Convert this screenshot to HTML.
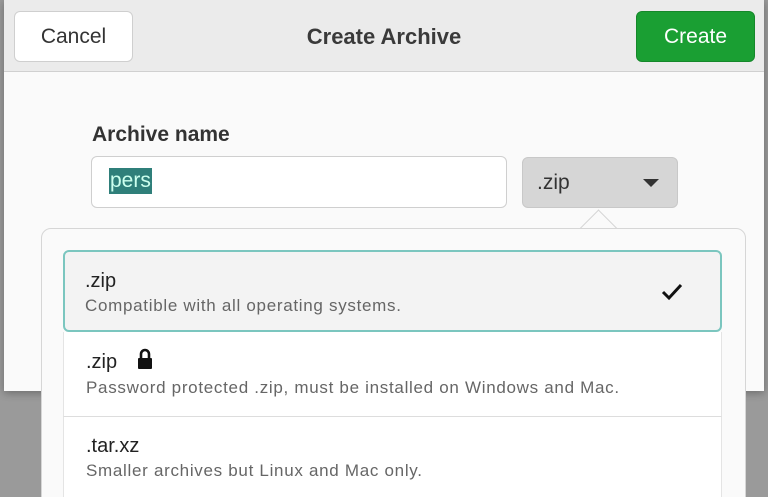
<!DOCTYPE html>
<html><head><style>
html,body{margin:0;width:768px;height:497px;overflow:hidden}
body{background:#9a9a9a;font-family:"Liberation Sans",sans-serif;position:relative}
.dlg{position:absolute;left:4px;top:0;width:760px;height:391px;background:#fafafa;box-shadow:0 2px 8px rgba(0,0,0,.3)}
.hdr{position:absolute;left:0;top:0;width:760px;height:71px;background:#ebebeb;border-bottom:1px solid #d0d0d0}
.btn{position:absolute;top:11px;height:51px;border-radius:6px;font-size:21px;line-height:49px;text-align:center;box-sizing:border-box}
.cancel{left:10px;width:119px;background:#fff;border:1px solid #cfcfcf;color:#333}
.create{left:632px;width:119px;background:#1a9f33;border:1px solid #15882a;color:#fff}
.title{position:absolute;left:0;width:760px;top:24px;text-align:center;font-weight:bold;font-size:22px;color:#3a3a3a}
.lbl{position:absolute;left:88px;top:123px;font-weight:bold;font-size:21px;color:#333}
.inp{position:absolute;left:87px;top:156px;width:416px;height:52px;box-sizing:border-box;background:#fff;border:1px solid #cfcfcf;border-radius:6px}
.sel{position:absolute;left:105px;top:168px;background:#2f7f7a;color:#cfe;font-size:21px;line-height:26px;padding:0 1px}
.dd{position:absolute;left:518px;top:157px;width:156px;height:51px;box-sizing:border-box;background:#d6d6d6;border:1px solid #c8c8c8;border-radius:6px}
.dd span{position:absolute;left:14px;top:13px;font-size:21px;color:#333}
.tri{position:absolute;left:120px;top:21px;width:0;height:0;border-left:8px solid transparent;border-right:8px solid transparent;border-top:8px solid #333}
.pop{position:absolute;left:41px;top:228px;width:705px;height:290px;background:#fafafa;border:1px solid #d6d6d6;border-radius:10px;box-sizing:border-box}
.arr{position:absolute;left:585px;top:215px;width:26px;height:26px;background:#fafafa;border-left:1px solid #d6d6d6;border-top:1px solid #d6d6d6;transform:rotate(45deg)}
.row{position:absolute;left:63px;width:659px;box-sizing:border-box;background:#fff}
.row b{position:absolute;left:22px;font-weight:normal;font-size:20px;color:#222}
.row i{position:absolute;left:22px;font-style:normal;font-size:17px;letter-spacing:0.7px;color:#666}
</style></head><body>
<div class="dlg">
<div class="hdr"><div class="btn cancel">Cancel</div><div class="title">Create Archive</div><div class="btn create">Create</div></div>
<div class="lbl">Archive name</div>
<div class="inp"></div><div class="sel">pers</div>
<div class="dd"><span>.zip</span><div class="tri"></div></div>
</div>
<div class="arr"></div>
<div class="pop"></div>
<div class="row" style="top:250px;height:82px;background:#f3f3f3;border:2px solid #7bc6bf;border-radius:6px">
<b style="top:18px;left:20px">.zip</b><i style="top:44px;left:20px">Compatible with all operating systems.</i>
<svg style="position:absolute;left:596px;top:31px" width="22" height="18" viewBox="0 0 22 18"><path d="M2 9 L8 15 L20 2" stroke="#111" stroke-width="3" fill="none"/></svg>
</div>
<div class="row" style="top:332px;height:85px;border-bottom:1px solid #ddd;border-left:1px solid #e4e4e4;border-right:1px solid #e4e4e4">
<b style="top:19px">.zip</b>
<svg style="position:absolute;left:72px;top:16px" width="18" height="22" viewBox="0 0 18 22"><path d="M5 10 V6 a4 4 0 0 1 8 0 V10" stroke="#111" stroke-width="2.6" fill="none"/><rect x="2" y="10" width="14" height="11" rx="1" fill="#111"/></svg>
<i style="top:46px">Password protected .zip, must be installed on Windows and Mac.</i></div>
<div class="row" style="top:417px;height:80px;border-left:1px solid #e4e4e4;border-right:1px solid #e4e4e4">
<b style="top:18px">.tar.xz</b><i style="top:44px">Smaller archives but Linux and Mac only.</i></div>
</body></html>
